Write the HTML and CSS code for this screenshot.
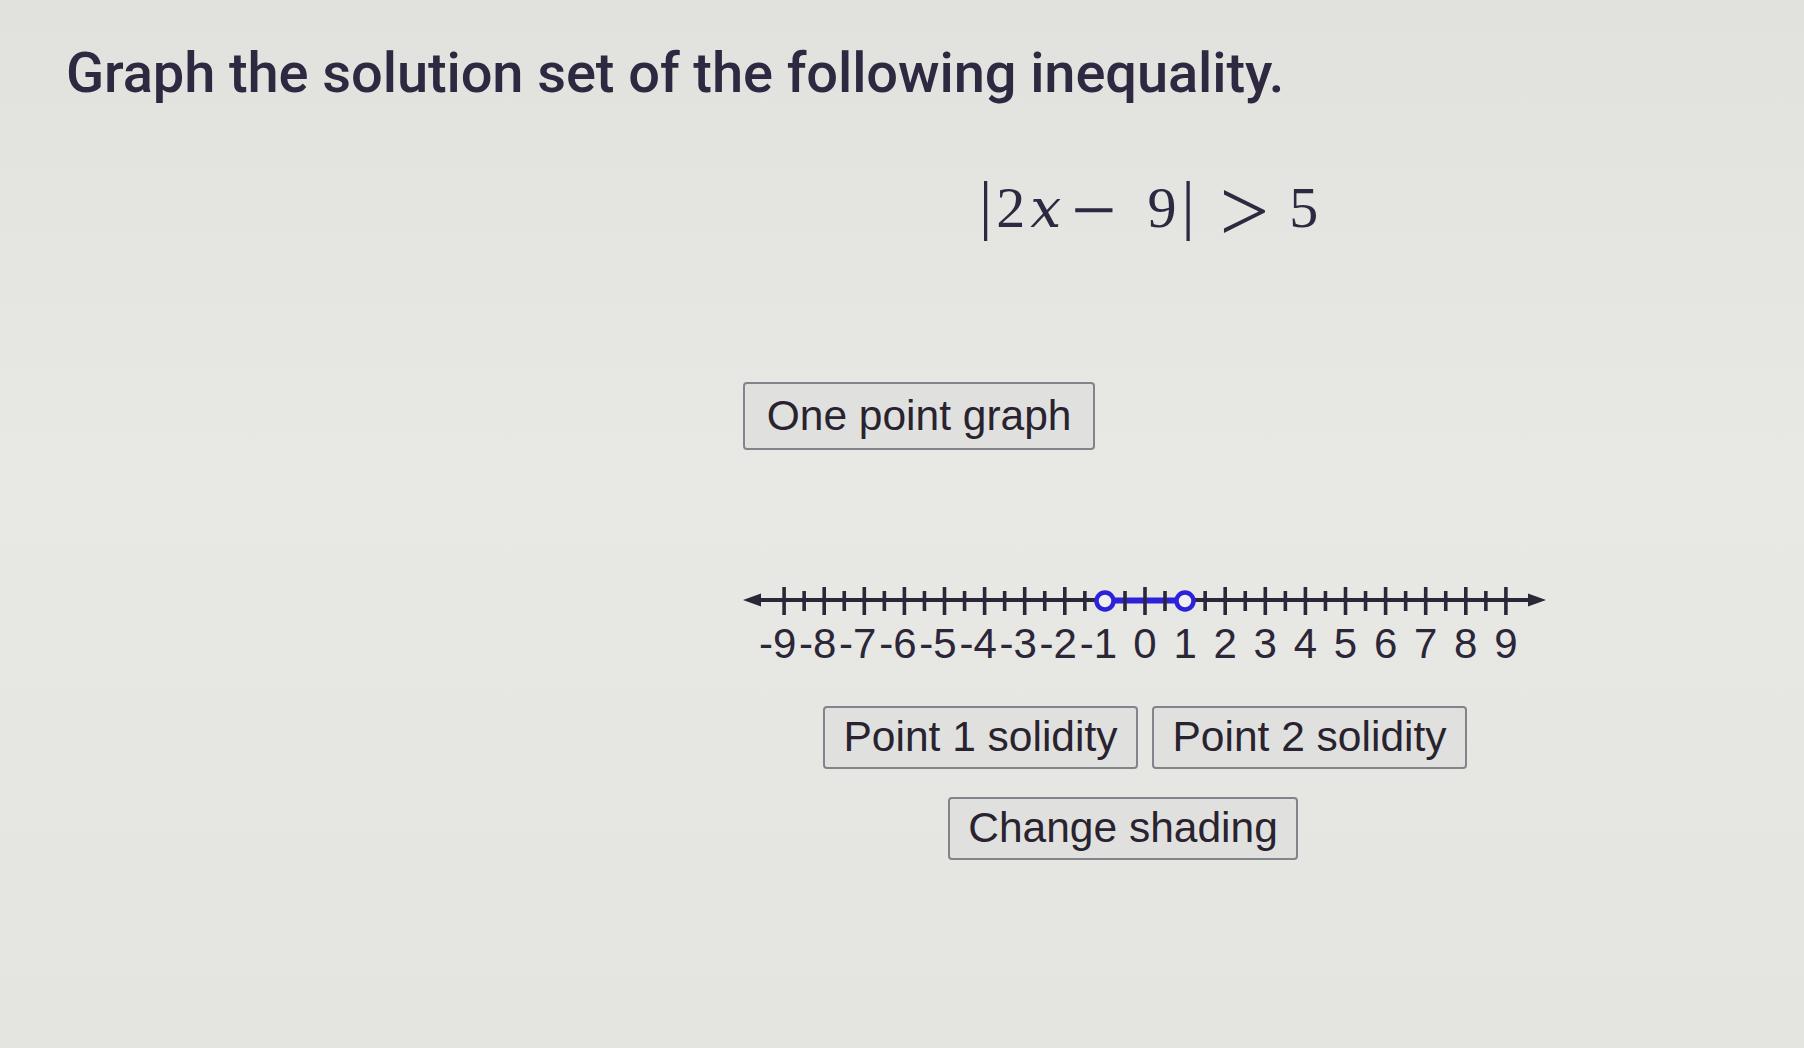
FILE: index.html
```html
<!DOCTYPE html>
<html lang="en">
<head>
<meta charset="utf-8">
<title>Graph the solution set</title>
<link rel="stylesheet" href="styles.css">
</head>
<body>
<main class="page">
  <h1 class="title">Graph the solution set of the following inequality.</h1>
  <section class="workspace">
    <div class="equation"><span class="bar">|</span><span class="num two">2</span><span class="var">x</span><span class="op minus">−</span><span class="num nine">9</span><span class="bar bar2">|</span><span class="op gt">&gt;</span><span class="num five">5</span></div>
    <div class="top-row"><button class="btn btn-lg">One point graph</button></div>
    <svg class="numberline" width="810" height="92" viewBox="0 0 810 92" xmlns="http://www.w3.org/2000/svg">
      <g fill="#2b2638">
        <polygon points="3,22 21,15.5 21,28.5"/>
        <polygon points="806,22 788,15.5 788,28.5"/>
      </g>
      <line x1="16" y1="22" x2="794" y2="22" stroke="#2b2638" stroke-width="4"/>
      <g id="ticks" stroke="#2b2638" stroke-width="3.6"></g>
      <line x1="365" y1="22.5" x2="445" y2="22.5" stroke="#2d22dc" stroke-width="6"/>
      <g stroke="#2b2638" stroke-width="3.6">
        <line x1="385" y1="13" x2="385" y2="33"/>
        <line x1="405" y1="9" x2="405" y2="37"/>
        <line x1="425" y1="13" x2="425" y2="33"/>
      </g>
      <g fill="#efeff0" stroke="#2d22dc" stroke-width="4.5">
        <circle cx="365" cy="23" r="8.5"/>
        <circle cx="445" cy="23" r="8.5"/>
      </g>
      <g id="labels" class="labels"></g>
    </svg>
    <div class="btn-row"><button class="btn">Point 1 solidity</button><button class="btn">Point 2 solidity</button></div>
    <div class="btn-row shade-row"><button class="btn">Change shading</button></div>
  </section>
</main>
<script src="script.js"></script>
</body>
</html>
```

FILE: script.js
```javascript
(function () {
  var ns = "http://www.w3.org/2000/svg";
  var ticks = document.getElementById("ticks");
  var labels = document.getElementById("labels");
  function pos(v) { return 405 + 40.1 * v; }
  for (var h = -18; h <= 18; h++) {
    if (h >= -2 && h <= 2) continue;
    var x = pos(h / 2);
    var major = h % 2 === 0;
    var l = document.createElementNS(ns, "line");
    l.setAttribute("x1", x); l.setAttribute("x2", x);
    l.setAttribute("y1", major ? 9 : 13);
    l.setAttribute("y2", major ? 37 : 33);
    ticks.appendChild(l);
  }
  for (var n = -9; n <= 9; n++) {
    var t = document.createElementNS(ns, "text");
    var cx = pos(n) + (n < 0 ? -6.5 : 0);
    t.setAttribute("x", cx.toFixed(1));
    t.setAttribute("y", 80);
    t.setAttribute("text-anchor", "middle");
    t.textContent = String(n);
    labels.appendChild(t);
  }
})();
```

FILE: styles.css
```css
html, body {
  margin: 0;
  padding: 0;
}
body {
  width: 1804px;
  height: 1048px;
  overflow: hidden;
  background: linear-gradient(180deg, #e1e1de 0%, #e8e8e5 45%, #e4e4e1 100%);
  color: #2b2638;
  font-family: Roboto, "Liberation Sans", sans-serif;
}
.page {
  display: flex;
  flex-direction: column;
}
.title {
  margin: 0;
  padding: 45px 0 0 66px;
  font-family: Roboto, "Liberation Sans", sans-serif;
  font-weight: 500;
  font-size: 56px;
  line-height: 56px;
  color: #2e2840;
  letter-spacing: -0.1px;
}
.workspace {
  margin-left: 740px;
  width: 810px;
  display: flex;
  flex-direction: column;
}
.equation {
  margin-top: 77px;
  height: 60px;
  padding-left: 239px;
  font-family: "Liberation Serif", "DejaVu Serif", serif;
  font-size: 58px;
  line-height: 60px;
  color: #2e2840;
  white-space: nowrap;
}
.equation .bar {
  font-size: 66px;
  font-weight: 300;
  line-height: 0;
}
.equation .two {
  margin-left: 4px;
}
.equation .var {
  font-family: "DejaVu Serif", serif;
  font-style: italic;
  font-size: 55px;
  line-height: 0;
  margin-left: 5px;
}
.equation .op {
  font-family: "Liberation Serif", serif;
  line-height: 0;
}
.equation .minus {
  font-size: 80px;
  margin-left: 10px;
  vertical-align: -10px;
}
.equation .nine {
  margin-left: 31px;
}
.equation .bar2 {
  margin-left: 5px;
}
.equation .gt {
  font-size: 88px;
  margin-left: 25px;
  vertical-align: -14px;
}
.equation .five {
  margin-left: 20px;
}
.top-row {
  margin-top: 144px;
  padding-left: 3px;
  display: flex;
}
.btn {
  box-sizing: border-box;
  height: 63px;
  padding: 0 18.5px;
  border: 2px solid #84828a;
  border-radius: 4px;
  background: #e0e0de;
  color: #28232f;
  font-family: "Liberation Sans", Arial, sans-serif;
  font-size: 42.5px;
  line-height: 1;
  white-space: nowrap;
}
.btn-lg {
  height: 68px;
  padding: 0 21.7px;
  font-size: 42.5px;
}
.numberline {
  display: block;
  margin-top: 128px;
}
.labels {
  font-family: "Liberation Sans", Arial, sans-serif;
  font-size: 42px;
  fill: #2b2638;
}
.btn-row {
  display: flex;
  justify-content: center;
  gap: 14px;
  margin-top: 36px;
}
.shade-row {
  margin-top: 28px;
  padding-right: 44px;
}
```
